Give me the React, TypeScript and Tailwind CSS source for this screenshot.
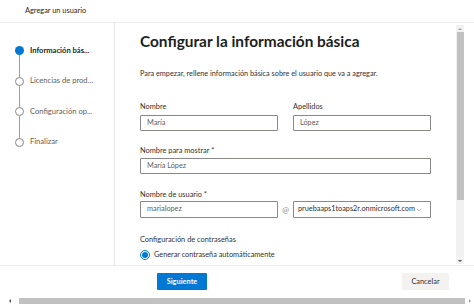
import { ChevronDown } from "lucide-react";

const steps = [
  { label: "Información bás...", active: true },
  { label: "Licencias de prod...", active: false },
  { label: "Configuración op...", active: false },
  { label: "Finalizar", active: false },
];

const inputCls =
  "h-[16px] border border-[#8a8886] rounded-[1px] px-[6px] flex items-center text-[7.3px] text-[#605e5c]";

const labelCls = "h-[10px] leading-[10px] text-[7.4px] text-[#323130]";

const StepNav = () => (
  <div className="w-[115px] shrink-0 border-r border-[#e6e6e6] pt-[23px] pl-[15px]">
    {steps.map((s, i) => (
      <div key={s.label}>
        <div className="flex items-center h-[9px] gap-[6px]">
          <div
            className={
              s.active
                ? "w-[9px] h-[9px] rounded-full bg-[#0078d4]"
                : "w-[9px] h-[9px] rounded-full border border-[#8a8886] bg-white"
            }
          />
          <span
            className={
              s.active
                ? "text-[7.6px] font-bold text-[#201f1e]"
                : "text-[7.6px] text-[#605e5c]"
            }
          >
            {s.label}
          </span>
        </div>
        {i < steps.length - 1 && (
          <div className="ml-[4px] w-px h-[21.5px] bg-[#a19f9d]" />
        )}
      </div>
    ))}
  </div>
);

const FakeVScroll = () => (
  <div className="w-[8px] shrink-0 mt-[2px] mb-[1px] bg-[#f1f1f1] flex flex-col items-center">
    <div className="h-[7px] flex items-center justify-center">
      <div className="w-0 h-0 border-l-[2px] border-r-[2px] border-b-[2px] border-l-transparent border-r-transparent border-b-[#a0a0a0]" />
    </div>
    <div className="w-[7px] h-[168px] bg-[#c1c1c1]" />
    <div className="flex-1" />
    <div className="h-[7px] flex items-center justify-center">
      <div className="w-0 h-0 border-l-[2px] border-r-[2px] border-t-[2px] border-l-transparent border-r-transparent border-t-[#505050]" />
    </div>
  </div>
);

const BasicInfoForm = () => (
  <div className="flex-1 overflow-hidden pl-[25px] pr-[25px]">
    <h1 className="mt-[8px] h-[20px] leading-[20px] text-[15.4px] font-bold text-[#201f1e] whitespace-nowrap">
      Configurar la información básica
    </h1>
    <p className="mt-[18px] h-[10px] leading-[10px] text-[7.3px] text-[#323130] whitespace-nowrap">
      Para empezar, rellene información básica sobre el usuario que va a agregar.
    </p>

    <div className="mt-[23px] flex gap-[15px]">
      <div className="w-[138px]">
        <div className={labelCls}>Nombre</div>
        <div className={`mt-[3px] ${inputCls}`}>María</div>
      </div>
      <div className="w-[138px]">
        <div className={labelCls}>Apellidos</div>
        <div className={`mt-[3px] ${inputCls}`}>López</div>
      </div>
    </div>

    <div className="mt-[15px] w-[291px]">
      <div className={labelCls}>Nombre para mostrar *</div>
      <div className={`mt-[2px] ${inputCls}`}>María López</div>
    </div>

    <div className="mt-[16px] w-[291px]">
      <div className={labelCls}>Nombre de usuario *</div>
      <div className="mt-[1px] flex items-center">
        <div className={`w-[138px] ${inputCls} h-[17px]`}>marialopez</div>
        <span className="w-[15px] text-center text-[8px] text-[#8a8886]">@</span>
        <div className={`w-[138px] ${inputCls} h-[17px] justify-between pl-[4px] pr-[7px] text-[#323130]`}>
          <span className="whitespace-nowrap">pruebaaps1toaps2r.onmicrosoft.com</span>
          <ChevronDown size={8} strokeWidth={1.5} className="text-[#8a8886]" />
        </div>
      </div>
    </div>

    <div className={`mt-[17px] ${labelCls}`}>Configuración de contraseñas</div>
    <div className="mt-[5px] flex items-center gap-[4px] h-[10px]">
      <div className="w-[10px] h-[10px] rounded-full border border-[#0078d4] flex items-center justify-center">
        <div className="w-[6px] h-[6px] rounded-full bg-[#0078d4]" />
      </div>
      <span className="text-[7.3px] text-[#323130]">Generar contraseña automáticamente</span>
    </div>
  </div>
);

export default function App() {
  return (
    <div
      className="w-[474px] h-[307px] bg-white flex flex-col overflow-hidden"
      style={{ fontFamily: 'Lato, "Noto Sans", sans-serif' }}
    >
      <div className="h-[23px] shrink-0 border-b border-[#ececec] pl-[25px] flex items-center text-[7.4px] text-[#201f1e]">
        Agregar un usuario
      </div>

      <div className="h-[242px] shrink-0 flex">
        <StepNav />
        <div className="flex-1 flex">
          <BasicInfoForm />
          <FakeVScroll />
          <div className="w-[11px] shrink-0" />
        </div>
      </div>

      <div className="h-[32px] shrink-0 border-t border-[#ececec] flex items-center justify-between pl-[157px] pr-[25px]">
        <button className="w-[50px] h-[17px] bg-[#0078d4] text-white text-[7.4px] font-bold rounded-[1px]">
          Siguiente
        </button>
        <button className="w-[47px] h-[17px] bg-[#f3f2f1] text-[#323130] text-[7.4px] rounded-[1px]">
          Cancelar
        </button>
      </div>

      <div className="h-[8px] shrink-0 flex items-center">
        <div className="w-[19px] flex justify-center">
          <div className="w-0 h-0 border-t-[2px] border-b-[2px] border-r-[2px] border-t-transparent border-b-transparent border-r-[#505050]" />
        </div>
        <div className="w-[446px] h-[6px] bg-[#c1c1c1]" />
        <div className="flex-1 flex justify-center">
          <div className="w-0 h-0 border-t-[2px] border-b-[2px] border-l-[2px] border-t-transparent border-b-transparent border-l-[#a0a0a0]" />
        </div>
      </div>
    </div>
  );
}
